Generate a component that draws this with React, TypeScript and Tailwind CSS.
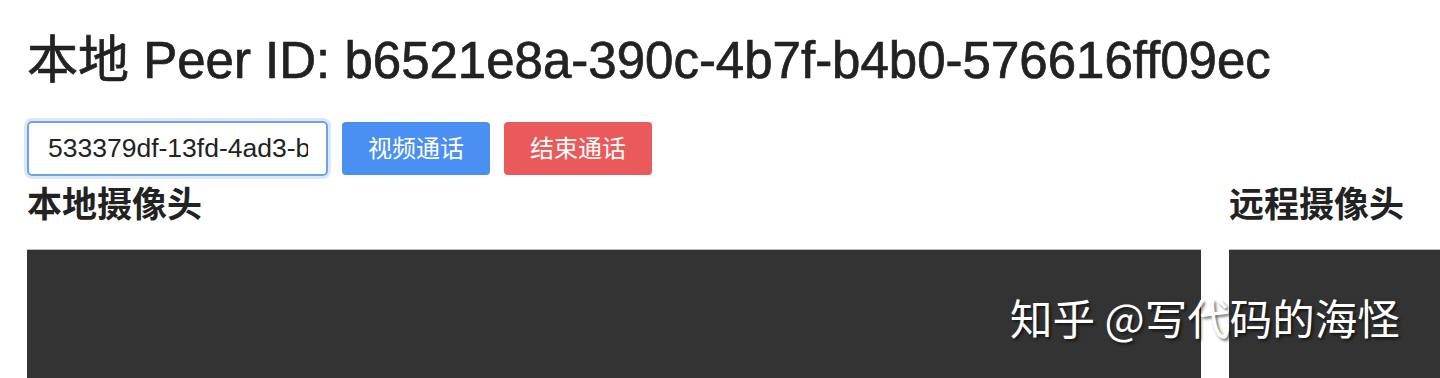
import React from "react";

const sans = { fontFamily: '"Liberation Sans", Arial, "Noto Sans CJK SC", sans-serif' };

export default function App() {
  return (
    <div className="relative w-[1440px] h-[378px] overflow-hidden bg-white text-[#222]" style={sans}>
      <div className="pl-[27px] pt-[29px]">
        <h1 className="text-[51px] leading-[64px] font-normal whitespace-nowrap [-webkit-text-stroke:0.7px_#222]">
          本地 Peer ID: b6521e8a-390c-4b7f-b4b0-576616ff09ec
        </h1>
        <div className="mt-[28px] flex items-center gap-[14px]">
          <div className="w-[301px] h-[55px] rounded-[5px] border-2 border-[#6fa2e6] shadow-[0_0_0_3px_#dbe8fa] flex items-center pl-[19px]">
            <div className="w-[260px] overflow-hidden">
              <span className="text-[26.5px] text-[#222] whitespace-nowrap">533379df-13fd-4ad3-b</span>
            </div>
          </div>
          <button className="w-[148px] h-[53px] rounded-[4px] bg-[#4a90f2] text-white text-[24px]">视频通话</button>
          <button className="w-[148px] h-[53px] rounded-[4px] bg-[#eb5a5a] text-white text-[24px]">结束通话</button>
        </div>
        <div className="flex gap-[28px] mt-[2px]">
          <div className="w-[1174px] shrink-0">
            <h3 className="text-[35px] leading-[54px] font-bold">本地摄像头</h3>
            <div className="mt-[17px] h-[200px] bg-[#333333] border-t border-[#bbbbbb]"></div>
          </div>
          <div className="flex-1 min-w-0">
            <h3 className="text-[35px] leading-[54px] font-bold whitespace-nowrap">远程摄像头</h3>
            <div className="mt-[17px] h-[200px] bg-[#333333] border-t border-[#bbbbbb]"></div>
          </div>
        </div>
      </div>
      <div
        className="absolute left-[1010px] top-[291px] text-[42.5px] leading-[52px] text-white whitespace-nowrap"
        style={{ textShadow: "2px 2px 3px rgba(0,0,0,0.6)", fontFamily: '"Noto Sans CJK SC", sans-serif' }}
      >
        知乎 @写代码的海怪
      </div>
    </div>
  );
}
